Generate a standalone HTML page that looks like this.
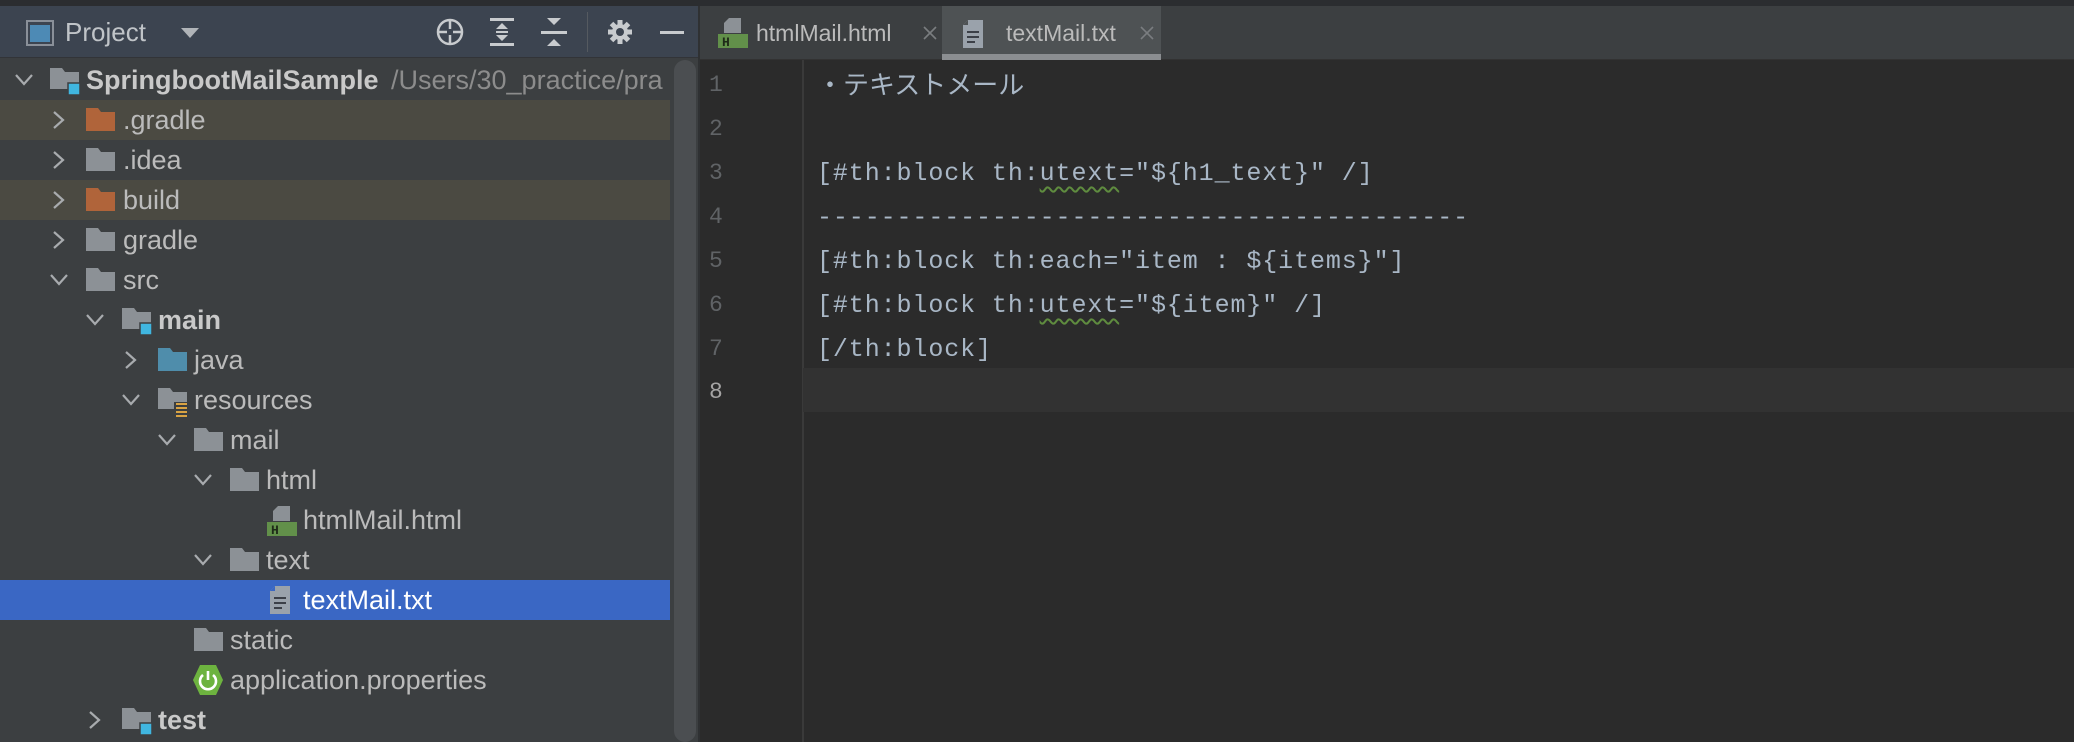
<!DOCTYPE html>
<html><head><meta charset="utf-8"><style>
*{margin:0;padding:0;box-sizing:border-box}
body{width:2074px;height:742px;overflow:hidden;background:#2b2b2b;position:relative;font-family:"Liberation Sans","Noto Sans CJK JP",sans-serif}
.a{position:absolute}
#top{left:0;top:0;width:2074px;height:6px;background:#2b2d30}
#left{left:0;top:6px;width:700px;height:736px;background:#3c3f41}
#hdr{left:0;top:6px;width:700px;height:52px;background:#3c4450;border-bottom:1px solid #323438}
.row{position:absolute;left:0;width:670px;height:40px;line-height:40px;font-size:27px;color:#bbbbbb;white-space:nowrap}
.row span.t{position:absolute}
.hl{background:#4b4a42}
.sel{background:#3a67c4;color:#fff}
#sb{left:674px;top:60px;width:22px;height:682px;background:#4b4e51;border-radius:11px}
#div{left:698px;top:6px;width:2px;height:736px;background:#2f3133}
#tabs{left:700px;top:6px;width:1374px;height:54px;background:#3c3f41;border-bottom:1px solid #323232}
.tab{position:absolute;top:0;height:54px;line-height:54px;font-size:23px;color:#bbbbbb}
.code{position:absolute;left:817px;font-family:"Liberation Mono","Noto Sans CJK JP",monospace;font-size:25px;letter-spacing:0.9px;color:#a9b7c6;height:44px;line-height:44px;white-space:pre}
.ln{position:absolute;left:709px;width:30px;font-family:"Liberation Mono",monospace;font-size:23px;color:#606366;height:44px;line-height:44px}
.w{text-decoration:underline wavy #5f8c3f;text-underline-offset:6px;text-decoration-thickness:1.5px}
</style></head><body>
<div id="top" class="a"></div>
<div id="left" class="a"></div>
<div id="hdr" class="a">
 <svg class="a" style="left:26px;top:14px" width="28" height="26"><rect x="1" y="1" width="26" height="24" fill="none" stroke="#8a9099" stroke-width="2"/><rect x="4" y="5" width="20" height="17" fill="#4d8ab5"/></svg>
 <div class="a" style="left:65px;line-height:38px;font-size:26px;color:#c0c4c8;top:7px">Project</div>
 <svg class="a" style="left:181px;top:22px" width="18" height="12"><path d="M0 0H18L9 10Z" fill="#b0b4b8"/></svg>
 <svg class="a" style="left:436px;top:12px" width="28" height="28" fill="none" stroke="#c8cbce" stroke-width="2.5"><circle cx="14" cy="14" r="12"/><path d="M14 2V11M14 17V26M2 14H11M17 14H26"/></svg>
 <svg class="a" style="left:490px;top:12px" width="24" height="28" fill="#c8cbce"><rect x="0" y="0" width="24" height="3"/><rect x="0" y="25" width="24" height="3"/><path d="M12 5L18 11H6Z M12 23L18 17H6Z"/><rect x="6" y="13" width="12" height="2"/></svg>
 <svg class="a" style="left:541px;top:12px" width="26" height="28" fill="#c8cbce"><path d="M6 0H20L13 7Z M6 28H20L13 21Z"/><rect x="0" y="13" width="26" height="3"/></svg>
 <div class="a" style="left:587px;top:6px;width:1px;height:40px;background:#555a60"></div>
 <svg class="a" style="left:607px;top:13px" width="26" height="26" viewBox="0 0 26 26"><g fill="#c8cbce"><circle cx="13" cy="13" r="8"/><g stroke="#c8cbce" stroke-width="5"><path d="M13 1V25M1 13H25M4.5 4.5L21.5 21.5M21.5 4.5L4.5 21.5"/></g></g><circle cx="13" cy="13" r="4" fill="#3c4450"/></svg>
 <div class="a" style="left:660px;top:25px;width:24px;height:3px;background:#c8cbce"></div>
</div>

<!-- tree -->
<div class="row" style="top:60px">
 <svg class="a" style="left:15px;top:14px" width="18" height="12" fill="none" stroke="#a8abae" stroke-width="2.2"><path d="M1 1L9 10L17 1"/></svg>
 <svg class="a" style="left:50px;top:8px" width="30" height="27"><path d="M0 0H12L15 4H29V21H0Z" fill="#8c9196"/><rect x="18" y="15" width="12" height="12" fill="#40b6e0" stroke="#3c3f41" stroke-width="1.5"/></svg>
 <span class="t" style="left:86px;font-weight:bold;color:#c9c9c9">SpringbootMailSample</span><span class="t" style="left:391px;color:#8c8c8c">/Users/30_practice/pra</span>
</div>
<div class="row hl" style="top:100px"><svg class="a" style="left:53px;top:11px" width="12" height="18" fill="none" stroke="#a8abae" stroke-width="2.2"><path d="M1 1L10 9L1 17"/></svg><svg class="a" style="left:86px;top:8px" width="29" height="23"><path d="M0 0H12L15 4H29V23H0Z" fill="#b0643a"/></svg><span class="t" style="left:123px">.gradle</span></div>
<div class="row" style="top:140px"><svg class="a" style="left:53px;top:11px" width="12" height="18" fill="none" stroke="#a8abae" stroke-width="2.2"><path d="M1 1L10 9L1 17"/></svg><svg class="a" style="left:86px;top:8px" width="29" height="23"><path d="M0 0H12L15 4H29V23H0Z" fill="#8c9196"/></svg><span class="t" style="left:123px">.idea</span></div>
<div class="row hl" style="top:180px"><svg class="a" style="left:53px;top:11px" width="12" height="18" fill="none" stroke="#a8abae" stroke-width="2.2"><path d="M1 1L10 9L1 17"/></svg><svg class="a" style="left:86px;top:8px" width="29" height="23"><path d="M0 0H12L15 4H29V23H0Z" fill="#b0643a"/></svg><span class="t" style="left:123px">build</span></div>
<div class="row" style="top:220px"><svg class="a" style="left:53px;top:11px" width="12" height="18" fill="none" stroke="#a8abae" stroke-width="2.2"><path d="M1 1L10 9L1 17"/></svg><svg class="a" style="left:86px;top:8px" width="29" height="23"><path d="M0 0H12L15 4H29V23H0Z" fill="#8c9196"/></svg><span class="t" style="left:123px">gradle</span></div>
<div class="row" style="top:260px"><svg class="a" style="left:50px;top:14px" width="18" height="12" fill="none" stroke="#a8abae" stroke-width="2.2"><path d="M1 1L9 10L17 1"/></svg><svg class="a" style="left:86px;top:8px" width="29" height="23"><path d="M0 0H12L15 4H29V23H0Z" fill="#8c9196"/></svg><span class="t" style="left:123px">src</span></div>
<div class="row" style="top:300px"><svg class="a" style="left:86px;top:14px" width="18" height="12" fill="none" stroke="#a8abae" stroke-width="2.2"><path d="M1 1L9 10L17 1"/></svg><svg class="a" style="left:122px;top:8px" width="30" height="27"><path d="M0 0H12L15 4H29V21H0Z" fill="#8c9196"/><rect x="18" y="15" width="12" height="12" fill="#40b6e0" stroke="#3c3f41" stroke-width="1.5"/></svg><span class="t" style="left:158px;font-weight:bold;color:#c9c9c9">main</span></div>
<div class="row" style="top:340px"><svg class="a" style="left:125px;top:11px" width="12" height="18" fill="none" stroke="#a8abae" stroke-width="2.2"><path d="M1 1L10 9L1 17"/></svg><svg class="a" style="left:158px;top:8px" width="29" height="23"><path d="M0 0H12L15 4H29V23H0Z" fill="#4f8dab"/></svg><span class="t" style="left:194px">java</span></div>
<div class="row" style="top:380px"><svg class="a" style="left:122px;top:14px" width="18" height="12" fill="none" stroke="#a8abae" stroke-width="2.2"><path d="M1 1L9 10L17 1"/></svg><svg class="a" style="left:158px;top:8px" width="30" height="29"><path d="M0 0H12L15 4H29V21H0Z" fill="#8c9196"/><rect x="16" y="14" width="14" height="15" fill="#3c3f41"/><g fill="#d9a343"><rect x="18" y="15" width="11" height="2"/><rect x="18" y="19" width="11" height="2"/><rect x="18" y="23" width="11" height="2"/><rect x="18" y="27" width="11" height="2"/></g></svg><span class="t" style="left:194px">resources</span></div>
<div class="row" style="top:420px"><svg class="a" style="left:158px;top:14px" width="18" height="12" fill="none" stroke="#a8abae" stroke-width="2.2"><path d="M1 1L9 10L17 1"/></svg><svg class="a" style="left:194px;top:8px" width="29" height="23"><path d="M0 0H12L15 4H29V23H0Z" fill="#8c9196"/></svg><span class="t" style="left:230px">mail</span></div>
<div class="row" style="top:460px"><svg class="a" style="left:194px;top:14px" width="18" height="12" fill="none" stroke="#a8abae" stroke-width="2.2"><path d="M1 1L9 10L17 1"/></svg><svg class="a" style="left:230px;top:8px" width="29" height="23"><path d="M0 0H12L15 4H29V23H0Z" fill="#8c9196"/></svg><span class="t" style="left:266px">html</span></div>
<div class="row" style="top:500px"><svg class="a" style="left:267px;top:6px" width="30" height="30"><path d="M6 0H23V15H6Z" fill="#8c9196"/><path d="M6 0L11 0L6 5Z" fill="#3c3f41"/><rect x="0" y="16" width="30" height="14" fill="#62904a"/><text x="4" y="28" font-family="Liberation Mono" font-size="13" font-weight="bold" fill="#1e2a18">H</text></svg><span class="t" style="left:303px">htmlMail.html</span></div>
<div class="row" style="top:540px"><svg class="a" style="left:194px;top:14px" width="18" height="12" fill="none" stroke="#a8abae" stroke-width="2.2"><path d="M1 1L9 10L17 1"/></svg><svg class="a" style="left:230px;top:8px" width="29" height="23"><path d="M0 0H12L15 4H29V23H0Z" fill="#8c9196"/></svg><span class="t" style="left:266px">text</span></div>
<div class="row sel" style="top:580px"><svg class="a" style="left:270px;top:6px" width="20" height="28"><path d="M5 0H20V28H0V5Z" fill="#9aa2ab"/><path d="M0 5L5 0V5Z" fill="#3a67c4"/><g fill="#3c4048"><rect x="4" y="11" width="12" height="2"/><rect x="4" y="16" width="12" height="2"/><rect x="4" y="21" width="8" height="2"/></g></svg><span class="t" style="left:303px">textMail.txt</span></div>
<div class="row" style="top:620px"><svg class="a" style="left:194px;top:8px" width="29" height="23"><path d="M0 0H12L15 4H29V23H0Z" fill="#8c9196"/></svg><span class="t" style="left:230px">static</span></div>
<div class="row" style="top:660px"><svg class="a" style="left:192px;top:4px" width="32" height="32" viewBox="0 0 32 32"><path d="M8 1H24L31 16L24 31H8L1 16Z" fill="#6db33f"/><path d="M11 11A8 8 0 1 0 21 11" fill="none" stroke="#fff" stroke-width="2.6"/><path d="M16 7V16" stroke="#fff" stroke-width="2.6"/></svg><span class="t" style="left:230px">application.properties</span></div>
<div class="row" style="top:700px"><svg class="a" style="left:89px;top:11px" width="12" height="18" fill="none" stroke="#a8abae" stroke-width="2.2"><path d="M1 1L10 9L1 17"/></svg><svg class="a" style="left:122px;top:8px" width="30" height="27"><path d="M0 0H12L15 4H29V21H0Z" fill="#8c9196"/><rect x="18" y="15" width="12" height="12" fill="#40b6e0" stroke="#3c3f41" stroke-width="1.5"/></svg><span class="t" style="left:158px;font-weight:bold;color:#c9c9c9">test</span></div>

<div id="sb" class="a"></div>
<div id="div" class="a"></div>

<!-- tabs -->
<div id="tabs" class="a">
 <div class="a" style="left:242px;top:0;width:219px;height:54px;background:#4e5254"></div>
 <div class="a" style="left:242px;top:48px;width:219px;height:6px;background:#8b8e91"></div>
 <svg class="a" style="left:18px;top:12px" width="30" height="30"><path d="M6 0H23V15H6Z" fill="#8c9196"/><path d="M6 0L11 0L6 5Z" fill="#3c3f41"/><rect x="0" y="16" width="30" height="14" fill="#62904a"/><text x="4" y="28" font-family="Liberation Mono" font-size="13" font-weight="bold" fill="#1e2a18">H</text></svg>
 <div class="tab" style="left:56px">htmlMail.html</div>
 <svg class="a" style="left:223px;top:20px" width="14" height="14" stroke="#7a7d80" stroke-width="1.6"><path d="M1 1L13 13M13 1L1 13"/></svg>
 <svg class="a" style="left:263px;top:14px" width="20" height="28"><path d="M5 0H20V28H0V5Z" fill="#9aa2ab"/><path d="M0 5L5 0V5Z" fill="#4e5254"/><g fill="#3c4048"><rect x="4" y="11" width="12" height="2"/><rect x="4" y="16" width="12" height="2"/><rect x="4" y="21" width="8" height="2"/></g></svg>
 <div class="tab" style="left:306px">textMail.txt</div>
 <svg class="a" style="left:440px;top:20px" width="14" height="14" stroke="#7a7d80" stroke-width="1.6"><path d="M1 1L13 13M13 1L1 13"/></svg>
</div>

<!-- editor -->
<div class="a" style="left:802px;top:60px;width:2px;height:682px;background:#3a3a3a"></div>
<div class="a" style="left:803px;top:368px;width:1271px;height:44px;background:#323232"></div>
<div class="ln" style="top:63px">1</div>
<div class="ln" style="top:107px">2</div>
<div class="ln" style="top:151px">3</div>
<div class="ln" style="top:195px">4</div>
<div class="ln" style="top:239px">5</div>
<div class="ln" style="top:283px">6</div>
<div class="ln" style="top:327px">7</div>
<div class="ln" style="top:370px;color:#a4a3a3">8</div>
<div class="code" style="top:63px;letter-spacing:0;font-size:26px;font-family:'Liberation Sans','Noto Sans CJK JP',sans-serif">・テキストメール</div>
<div class="code" style="top:152px">[#th:block th:<span class="w">utext</span>="${h1_text}" /]</div>
<div class="code" style="top:196px">-----------------------------------------</div>
<div class="code" style="top:240px">[#th:block th:each="item : ${items}"]</div>
<div class="code" style="top:284px">[#th:block th:<span class="w">utext</span>="${item}" /]</div>
<div class="code" style="top:328px">[/th:block]</div>
</body></html>
